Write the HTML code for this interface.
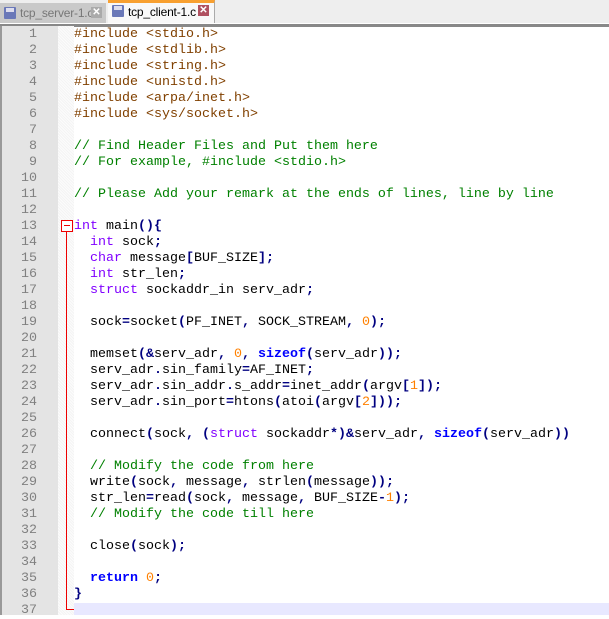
<!DOCTYPE html><html><head><style>
body{margin:0;width:609px;height:615px;overflow:hidden;background:#fff;font-family:"Liberation Sans",sans-serif;position:relative}
.tabbar{position:absolute;left:0;top:0;width:609px;height:23px;background:#eeeeee}
.tab{position:absolute;top:3px;height:20px;font-size:12px;line-height:20px;letter-spacing:-0.2px}
.t1{left:0;width:106px;background:#c9c9c9;color:#777}
.t2{left:108px;top:0;height:23px;width:107px;background:#f8f8f8;border-top:3px solid #f8a030;box-sizing:border-box;color:#000;line-height:19px;border-right:1px solid #aaa}
.ic{position:absolute;top:4px;left:4px;width:12px;height:12px;background:#6a78b8;border-radius:1px}
.ic:after{content:"";position:absolute;left:2px;top:1px;width:8px;height:4px;background:#dde}
.x{position:absolute;top:4px;width:11px;height:11px;font-size:10px;line-height:11px;text-align:center;color:#fff;font-weight:bold;letter-spacing:0}
.sep{position:absolute;left:0;top:23px;width:609px;height:3px;background:#888;border-top:1px solid #fff}
.gut{position:absolute;left:0;top:26px;width:58px;height:589px;background:#e4e4e4;border-left:2px solid #999;box-sizing:border-box}
.fold{position:absolute;left:58px;top:26px;width:16px;height:589px;background:repeating-linear-gradient(45deg,#f4f4f4 0 1px,#fcfcfc 1px 2px)}
.code{position:absolute;left:0;top:27px;width:609px;font-family:"Liberation Mono",monospace;font-size:13.33px}
.l{height:16px;line-height:16px;white-space:pre;position:relative}
.n{position:absolute;left:0;width:37px;text-align:right;color:#808080}
.c{position:absolute;left:74px}
.cur{position:absolute;left:74px;top:603px;width:535px;height:12px;background:#e8e8ff}
.p{color:#804000}.g{color:#008000}.k{color:#8000ff}.b{color:#0000ff;font-weight:bold}.o{color:#000080;font-weight:bold}.num{color:#ff8000}
</style></head><body>
<div class="tabbar"></div>
<div class="tab t1"><div class="ic"></div><span style="position:absolute;left:20px">tcp_server-1.c</span><div class="x" style="left:91px;background:#aaa">✕</div></div>
<div class="tab t2"><div class="ic" style="top:2px"></div><span style="position:absolute;left:20px">tcp_client-1.c</span><div class="x" style="left:90px;top:2px;background:#b05060">✕</div></div>
<div class="sep"></div>
<div class="gut"></div><div class="fold"></div>
<div class="cur"></div>
<div style="position:absolute;left:61px;top:220px;width:10px;height:10px;border:1px solid #e00;background:#fff"><div style="position:absolute;left:2px;top:4px;width:6px;height:1px;background:#e00"></div></div>
<div style="position:absolute;left:66px;top:232px;width:1px;height:378px;background:#e00"></div>
<div style="position:absolute;left:66px;top:609px;width:8px;height:1px;background:#e00"></div>
<div class="code">
<div class="l"><span class="n">1</span><span class="c"><span class="p">#include &lt;stdio.h&gt;</span></span></div>
<div class="l"><span class="n">2</span><span class="c"><span class="p">#include &lt;stdlib.h&gt;</span></span></div>
<div class="l"><span class="n">3</span><span class="c"><span class="p">#include &lt;string.h&gt;</span></span></div>
<div class="l"><span class="n">4</span><span class="c"><span class="p">#include &lt;unistd.h&gt;</span></span></div>
<div class="l"><span class="n">5</span><span class="c"><span class="p">#include &lt;arpa/inet.h&gt;</span></span></div>
<div class="l"><span class="n">6</span><span class="c"><span class="p">#include &lt;sys/socket.h&gt;</span></span></div>
<div class="l"><span class="n">7</span></div>
<div class="l"><span class="n">8</span><span class="c"><span class="g">// Find Header Files and Put them here</span></span></div>
<div class="l"><span class="n">9</span><span class="c"><span class="g">// For example, #include &lt;stdio.h&gt;</span></span></div>
<div class="l"><span class="n">10</span></div>
<div class="l"><span class="n">11</span><span class="c"><span class="g">// Please Add your remark at the ends of lines, line by line</span></span></div>
<div class="l"><span class="n">12</span></div>
<div class="l"><span class="n">13</span><span class="c"><span class="k">int</span> main<span class="o">(){</span></span></div>
<div class="l"><span class="n">14</span><span class="c">  <span class="k">int</span> sock<span class="o">;</span></span></div>
<div class="l"><span class="n">15</span><span class="c">  <span class="k">char</span> message<span class="o">[</span>BUF_SIZE<span class="o">];</span></span></div>
<div class="l"><span class="n">16</span><span class="c">  <span class="k">int</span> str_len<span class="o">;</span></span></div>
<div class="l"><span class="n">17</span><span class="c">  <span class="k">struct</span> sockaddr_in serv_adr<span class="o">;</span></span></div>
<div class="l"><span class="n">18</span></div>
<div class="l"><span class="n">19</span><span class="c">  sock<span class="o">=</span>socket<span class="o">(</span>PF_INET<span class="o">,</span> SOCK_STREAM<span class="o">,</span> <span class="num">0</span><span class="o">);</span></span></div>
<div class="l"><span class="n">20</span></div>
<div class="l"><span class="n">21</span><span class="c">  memset<span class="o">(&amp;</span>serv_adr<span class="o">,</span> <span class="num">0</span><span class="o">,</span> <span class="b">sizeof</span><span class="o">(</span>serv_adr<span class="o">));</span></span></div>
<div class="l"><span class="n">22</span><span class="c">  serv_adr<span class="o">.</span>sin_family<span class="o">=</span>AF_INET<span class="o">;</span></span></div>
<div class="l"><span class="n">23</span><span class="c">  serv_adr<span class="o">.</span>sin_addr<span class="o">.</span>s_addr<span class="o">=</span>inet_addr<span class="o">(</span>argv<span class="o">[</span><span class="num">1</span><span class="o">]);</span></span></div>
<div class="l"><span class="n">24</span><span class="c">  serv_adr<span class="o">.</span>sin_port<span class="o">=</span>htons<span class="o">(</span>atoi<span class="o">(</span>argv<span class="o">[</span><span class="num">2</span><span class="o">]));</span></span></div>
<div class="l"><span class="n">25</span></div>
<div class="l"><span class="n">26</span><span class="c">  connect<span class="o">(</span>sock<span class="o">,</span> <span class="o">(</span><span class="k">struct</span> sockaddr<span class="o">*)&amp;</span>serv_adr<span class="o">,</span> <span class="b">sizeof</span><span class="o">(</span>serv_adr<span class="o">))</span></span></div>
<div class="l"><span class="n">27</span></div>
<div class="l"><span class="n">28</span><span class="c">  <span class="g">// Modify the code from here</span></span></div>
<div class="l"><span class="n">29</span><span class="c">  write<span class="o">(</span>sock<span class="o">,</span> message<span class="o">,</span> strlen<span class="o">(</span>message<span class="o">));</span></span></div>
<div class="l"><span class="n">30</span><span class="c">  str_len<span class="o">=</span>read<span class="o">(</span>sock<span class="o">,</span> message<span class="o">,</span> BUF_SIZE<span class="o">-</span><span class="num">1</span><span class="o">);</span></span></div>
<div class="l"><span class="n">31</span><span class="c">  <span class="g">// Modify the code till here</span></span></div>
<div class="l"><span class="n">32</span></div>
<div class="l"><span class="n">33</span><span class="c">  close<span class="o">(</span>sock<span class="o">);</span></span></div>
<div class="l"><span class="n">34</span></div>
<div class="l"><span class="n">35</span><span class="c">  <span class="b">return</span> <span class="num">0</span><span class="o">;</span></span></div>
<div class="l"><span class="n">36</span><span class="c"><span class="o">}</span></span></div>
<div class="l"><span class="n">37</span></div>
</div>
</body></html>
